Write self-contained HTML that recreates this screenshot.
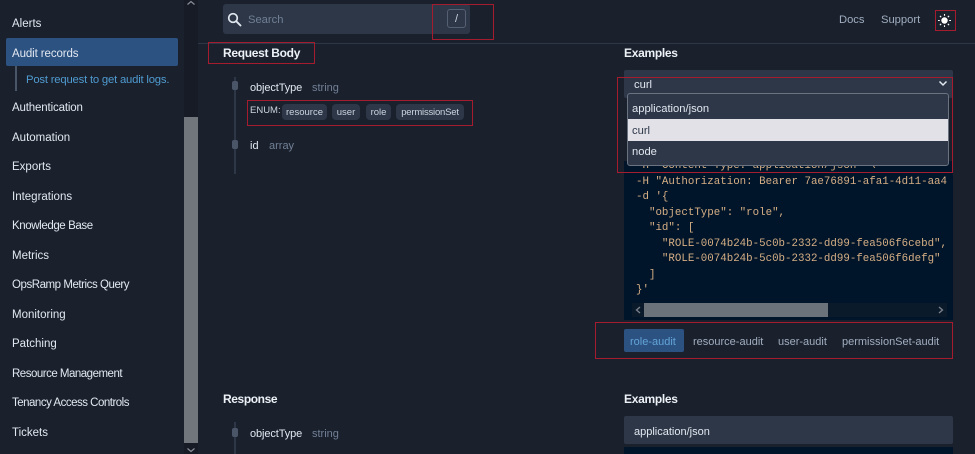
<!DOCTYPE html>
<html><head><meta charset="utf-8"><style>
html,body{margin:0;padding:0;background:#1a202c}
#p{position:relative;width:975px;height:454px;overflow:hidden;background:#1a202c;font-family:"Liberation Sans",sans-serif;font-size:11px;color:#e2e8f0}
#p div{position:absolute;white-space:nowrap}
.n{left:12px;font-size:11.5px;line-height:16px;color:#e2e8f0}
.red{border:1px solid #a51c2e;box-sizing:border-box}
.h{font-size:12px;letter-spacing:-.3px;font-weight:bold;line-height:16px;color:#edf2f7}
.g{color:#718096}
.pill{background:#2d3748;border-radius:4px;height:16px;line-height:17px;text-align:center;font-size:9.5px;color:#cbd5e0;top:104px}
.dot{left:232px;width:6px;height:9px;background:#4a5568;border-radius:2px}
.vl{left:234px;width:2px;background:#2d3748}
#p .c{left:636px;font-family:"Liberation Mono",monospace;font-size:10.8px;line-height:15.5px;color:#d6ae84;white-space:pre}
.t{top:334px;height:16px;line-height:16px;font-size:11px;color:#a0aec0}
.o{left:632px;font-size:11.2px;line-height:16px;color:#e2e8f0}
</style></head><body><div id="p">

<div class="n" style="top:16px">Alerts</div>
<div style="left:6px;top:38px;width:172px;height:28px;background:#2c5282;border-radius:2px"></div>
<div class="n" style="top:46px;letter-spacing:-.1px">Audit records</div>
<div style="left:15px;top:66px;width:2px;height:25px;background:#4a5568"></div>
<div class="n" style="left:26px;top:72px;color:#4f9bd1;font-size:11.3px;letter-spacing:-.2px">Post request to get audit logs.</div>
<div class="n" style="top:100px;letter-spacing:-.15px">Authentication</div>
<div class="n" style="top:130px">Automation</div>
<div class="n" style="top:159px">Exports</div>
<div class="n" style="top:189px">Integrations</div>
<div class="n" style="top:218px;letter-spacing:-.4px">Knowledge Base</div>
<div class="n" style="top:248px">Metrics</div>
<div class="n" style="top:277px;letter-spacing:-.45px">OpsRamp Metrics Query</div>
<div class="n" style="top:307px">Monitoring</div>
<div class="n" style="top:336px">Patching</div>
<div class="n" style="top:366px;letter-spacing:-.5px">Resource Management</div>
<div class="n" style="top:395px;letter-spacing:-.5px">Tenancy Access Controls</div>
<div class="n" style="top:425px">Tickets</div>

<div style="left:184px;top:0;width:14px;height:454px;background:#161b26"></div>
<div style="left:184px;top:117px;width:14px;height:326px;background:#71757c"></div>
<svg style="position:absolute;left:184px;top:0" width="14" height="8"><path d="M3.500 4.500L7 1.500L10.500 4.500" fill="none" stroke="#8a8f98" stroke-width="1.200"/></svg>
<svg style="position:absolute;left:184px;top:446px" width="14" height="8"><path d="M3.500 2.500L7 5.500L10.500 2.500" fill="none" stroke="#8a8f98" stroke-width="1.200"/></svg>

<div style="left:198px;top:43px;width:777px;height:1px;background:#2d3748"></div>
<div style="left:223px;top:4px;width:247px;height:30px;background:#2d3748;border-radius:3px"></div>
<svg style="position:absolute;left:226px;top:11px" width="17" height="17" viewBox="0 0 17 17"><circle cx="7" cy="7" r="4.300" fill="none" stroke="#e2e8f0" stroke-width="1.700"/><path d="M10.200 10.200L14.500 14.500" stroke="#e2e8f0" stroke-width="1.900" stroke-linecap="round"/></svg>
<div style="left:248px;top:12px;line-height:16px;font-size:11.200px;color:#718096">Search</div>
<div class="red" style="left:432px;top:4px;width:62px;height:36px"></div>
<div style="left:447px;top:9px;width:19px;height:19px;box-sizing:border-box;border:1px solid #566074;border-radius:3px;background:#2d3748;text-align:center;line-height:18px;font-size:11px;color:#cbd5e0">/</div>

<div style="left:839px;top:12px;line-height:16px;color:#a0aec0;font-size:11.200px">Docs</div>
<div style="left:881px;top:12px;line-height:16px;color:#a0aec0;font-size:11.200px">Support</div>
<div class="red" style="left:935px;top:10px;width:21px;height:21px"></div>
<svg style="position:absolute;left:937px;top:12.500px" width="15" height="15" viewBox="0 0 15 15"><circle cx="7.500" cy="7.500" r="3.200" fill="#fff"/><path d="M7.500 1v1.800M7.500 12.200V14M1 7.500h1.800M12.200 7.500H14M2.900 2.900l1.300 1.300M10.800 10.800l1.300 1.300M2.900 12.100l1.300-1.300M10.800 4.200l1.300-1.300" stroke="#fff" stroke-width="1.100"/></svg>

<div class="red" style="left:208px;top:42px;width:107px;height:22px"></div>
<div class="h" style="left:223px;top:45px">Request Body</div>
<div class="vl" style="top:77px;height:97px"></div>
<div class="dot" style="top:81px"></div>
<div class="dot" style="top:140px"></div>
<div style="left:250px;top:80px;line-height:16px;color:#e2e8f0;letter-spacing:-.1px">objectType</div>
<div class="g" style="left:312px;top:80px;line-height:16px">string</div>
<div style="left:250px;top:138px;line-height:16px;color:#e2e8f0">id</div>
<div class="g" style="left:269px;top:138px;line-height:16px">array</div>
<div class="red" style="left:247px;top:100px;width:226px;height:26px"></div>
<div style="left:250px;top:103px;line-height:16px;font-size:9.500px;color:#cbd5e0">ENUM:</div>
<div class="pill" style="left:282px;width:45px">resource</div>
<div class="pill" style="left:332px;width:28px">user</div>
<div class="pill" style="left:366px;width:25px">role</div>
<div class="pill" style="left:396px;width:68px;letter-spacing:-.2px">permissionSet</div>

<div class="h" style="left:624px;top:45px">Examples</div>
<div style="left:624px;top:70px;width:329px;height:28px;background:#2d3748;border-radius:2px"></div>
<div style="left:634px;top:77px;line-height:16px;color:#e2e8f0;font-size:11.200px">curl</div>
<svg style="position:absolute;left:937px;top:80px" width="12" height="8"><path d="M2.500 1.500L6 5L9.500 1.500" fill="none" stroke="#e2e8f0" stroke-width="1.500"/></svg>

<div style="left:624px;top:161px;width:329px;height:159px;background:#00152a"></div>
<div class="c" style="top:159px">-H "Content-Type: application/json" \</div>
<div class="c" style="top:174.500px">-H "Authorization: Bearer 7ae76891-afa1-4d11-aa4</div>
<div class="c" style="top:190px">-d '{</div>
<div class="c" style="top:205.500px">  "objectType": "role",</div>
<div class="c" style="top:221px">  "id": [</div>
<div class="c" style="top:236.500px">    "ROLE-0074b24b-5c0b-2332-dd99-fea506f6cebd",</div>
<div class="c" style="top:252px">    "ROLE-0074b24b-5c0b-2332-dd99-fea506f6defg"</div>
<div class="c" style="top:267.500px">  ]</div>
<div class="c" style="top:283px">}'</div>
<div style="left:632px;top:303px;width:315px;height:14px;background:#0b1a2a"></div>
<div style="left:644px;top:303px;width:184px;height:14px;background:#6c727a"></div>
<svg style="position:absolute;left:632px;top:303px" width="12" height="14"><path d="M8 4L4.500 7L8 10" fill="none" stroke="#7b828c" stroke-width="1.300"/></svg>
<svg style="position:absolute;left:935px;top:303px" width="12" height="14"><path d="M4 4L7.500 7L4 10" fill="none" stroke="#7b828c" stroke-width="1.300"/></svg>

<div style="left:627px;top:93px;width:322px;height:73px;box-sizing:border-box;border:1px solid #6b7280;border-radius:3px;background:#2d3748"></div>
<div style="left:628px;top:119px;width:320px;height:22px;background:#e2e1e7"></div>
<div class="o" style="top:101px">application/json</div>
<div class="o" style="top:123px;color:#2d3748">curl</div>
<div class="o" style="top:144px">node</div>
<div class="red" style="left:617px;top:77px;width:336px;height:96px"></div>

<div class="red" style="left:595px;top:322px;width:358px;height:37px"></div>
<div style="left:624px;top:329px;width:60px;height:23px;background:#2c5282;border-radius:2px"></div>
<div class="t" style="left:630px;color:#63a4d8">role-audit</div>
<div class="t" style="left:693px">resource-audit</div>
<div class="t" style="left:778px">user-audit</div>
<div class="t" style="left:842px">permissionSet-audit</div>

<div class="h" style="left:223px;top:391px;letter-spacing:-.4px">Response</div>
<div class="vl" style="top:422px;height:32px"></div>
<div class="dot" style="top:428px"></div>
<div style="left:250px;top:426px;line-height:16px;letter-spacing:-.1px">objectType</div>
<div class="g" style="left:312px;top:426px;line-height:16px">string</div>

<div class="h" style="left:624px;top:391px">Examples</div>
<div style="left:624px;top:416px;width:329px;height:28px;background:#2d3748;border-radius:2px"></div>
<div style="left:634px;top:424px;line-height:16px;color:#e2e8f0">application/json</div>
<div style="left:624px;top:447px;width:329px;height:7px;background:#00152a"></div>

</div></body></html>
